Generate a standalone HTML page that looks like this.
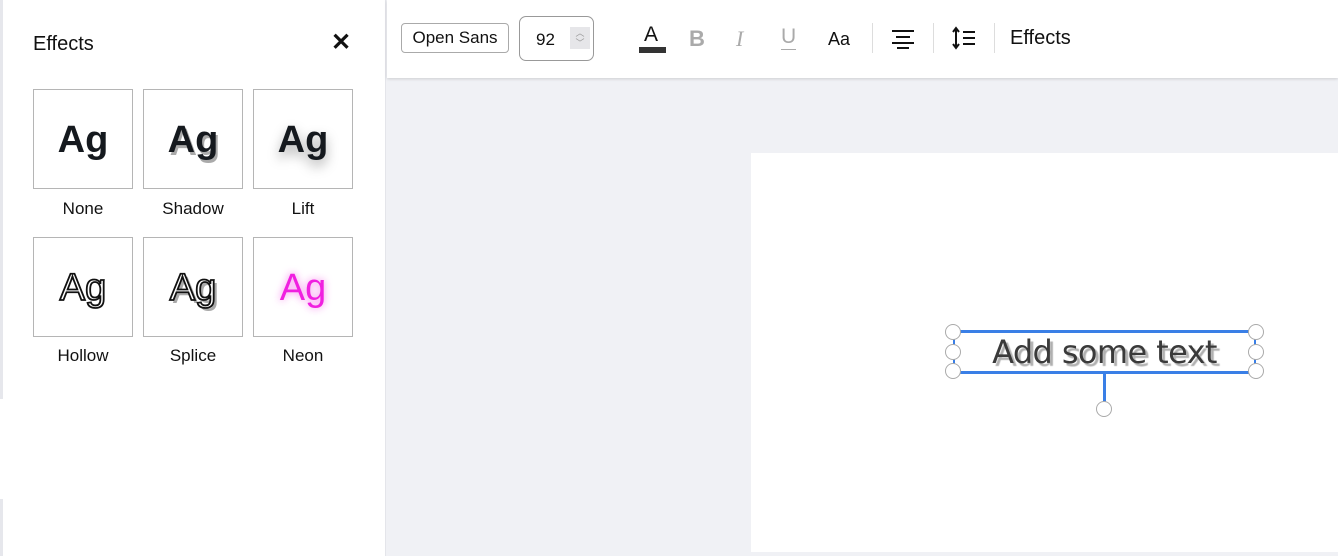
<!DOCTYPE html>
<html><head><style>
*{margin:0;padding:0;box-sizing:border-box}
body{width:1338px;height:556px;overflow:hidden;background:#f0f1f5;font-family:"Liberation Sans",sans-serif;position:relative}
.abs{position:absolute}
.panel{left:0;top:0;width:386px;height:556px;background:#fff;border-right:1px solid #e4e5ea}
.strip{left:0;width:3px;background:#e6e7ec}
.tile{position:absolute;width:100px;height:100px;border:1px solid #b5b5b5;background:#fff;display:flex;align-items:center;justify-content:center;font-size:38px;font-weight:bold;color:#15191e;padding-top:2px}
.lbl{position:absolute;width:100px;text-align:center;font-size:17px;color:#111}
.toolbar{left:387px;top:0;width:951px;height:78px;background:#fff;box-shadow:0 1px 3px rgba(0,0,0,.15)}
.sep{position:absolute;top:23px;width:1px;height:30px;background:#ddd}
.h{position:absolute;width:16px;height:16px;border-radius:50%;background:#fff;border:1px solid #aaa}
</style></head><body>
<div class="abs panel"></div>
<div class="abs strip" style="top:0;height:399px"></div>
<div class="abs strip" style="top:499px;height:57px"></div>
<div class="abs" style="left:33px;top:33px;font-size:20px;color:#111">Effects</div>
<div class="abs" style="left:331px;top:28px;font-size:24px;font-weight:bold;color:#111">✕</div>

<div class="tile" style="left:33px;top:89px">Ag</div>
<div class="tile" style="left:143px;top:89px;text-shadow:2px 3px 0 #aaa">Ag</div>
<div class="tile" style="left:253px;top:89px;text-shadow:0 6px 12px rgba(0,0,0,.35)">Ag</div>
<div class="lbl" style="left:33px;top:199px">None</div>
<div class="lbl" style="left:143px;top:199px">Shadow</div>
<div class="lbl" style="left:253px;top:199px">Lift</div>

<div class="tile" style="left:33px;top:237px;color:#fff;-webkit-text-stroke:1.8px #111;font-weight:normal">Ag</div>
<div class="tile" style="left:143px;top:237px;color:#fff;-webkit-text-stroke:1.8px #111;font-weight:normal;text-shadow:3px 3px 0 #aaa">Ag</div>
<div class="tile" style="left:253px;top:237px;color:#f020e0;font-weight:normal;text-shadow:0 0 8px rgba(240,32,224,.6)">Ag</div>
<div class="lbl" style="left:33px;top:346px">Hollow</div>
<div class="lbl" style="left:143px;top:346px">Splice</div>
<div class="lbl" style="left:253px;top:346px">Neon</div>

<div class="abs toolbar"></div>
<div class="abs" style="left:401px;top:23px;width:108px;height:30px;border:1px solid #aaa;border-radius:4px;font-size:17px;line-height:28px;text-align:center;color:#111">Open Sans</div>
<div class="abs" style="left:519px;top:16px;width:75px;height:45px;border:1px solid #999;border-radius:7px;font-size:17px;line-height:45px;padding-left:16px;color:#111">92</div>
<div class="abs" style="left:570px;top:27px;width:20px;height:22px;background:#e6e6e9;color:#999;font-size:9px;line-height:10px;text-align:center;padding-top:1px">︿<br>﹀</div>
<div class="abs" style="left:644px;top:23px;font-size:21px;color:#111">A</div>
<div class="abs" style="left:639px;top:47px;width:27px;height:6px;background:#333"></div>
<div class="abs" style="left:689px;top:26px;font-size:22px;font-weight:bold;color:#aaa">B</div>
<div class="abs" style="left:736px;top:26px;font-size:22px;font-style:italic;color:#aaa;font-family:'Liberation Serif',serif">I</div>
<div class="abs" style="left:781px;top:25px;font-size:21px;color:#aaa;border-bottom:1px solid #aaa;line-height:24px">U</div>
<div class="abs" style="left:828px;top:29px;font-size:18px;color:#111">Aa</div>
<div class="sep" style="left:872px"></div>
<svg class="abs" style="left:891px;top:28px" width="24" height="22"><g stroke="#111" stroke-width="2"><line x1="1" y1="3" x2="23" y2="3"/><line x1="5" y1="9" x2="19" y2="9"/><line x1="1" y1="15" x2="23" y2="15"/><line x1="6" y1="20" x2="18" y2="20"/></g></svg>
<div class="sep" style="left:933px"></div>
<svg class="abs" style="left:952px;top:26px" width="24" height="24"><g stroke="#111" stroke-width="2" fill="none"><line x1="4" y1="3" x2="4" y2="21"/><path d="M1 6 L4 2 L7 6 M1 18 L4 22 L7 18"/><line x1="11" y1="6" x2="23" y2="6"/><line x1="11" y1="12" x2="23" y2="12"/><line x1="11" y1="18" x2="23" y2="18"/></g></svg>
<div class="sep" style="left:994px"></div>
<div class="abs" style="left:1010px;top:27px;font-size:20px;color:#111">Effects</div>

<div class="abs" style="left:751px;top:153px;width:587px;height:399px;background:#fff"></div>
<div class="abs" style="left:953px;top:330px;width:303px;height:44px;border-top:3px solid #3a7fe6;border-bottom:3px solid #3a7fe6;border-left:2px solid #3a7fe6;border-right:2px solid #3a7fe6"></div>
<div class="abs" style="left:1103px;top:374px;width:3px;height:28px;background:#3a7fe6"></div>
<div class="abs" style="left:953px;top:332px;width:303px;text-align:center;font-family:'DejaVu Sans',sans-serif;font-size:32px;letter-spacing:-0.6px;color:#3a3a3a;text-shadow:3px 3px 1px #b0b0b0;line-height:40px">Add some text</div>
<div class="h" style="left:945px;top:324px"></div>
<div class="h" style="left:945px;top:344px"></div>
<div class="h" style="left:945px;top:363px"></div>
<div class="h" style="left:1248px;top:324px"></div>
<div class="h" style="left:1248px;top:344px"></div>
<div class="h" style="left:1248px;top:363px"></div>
<div class="h" style="left:1096px;top:401px"></div>
</body></html>
